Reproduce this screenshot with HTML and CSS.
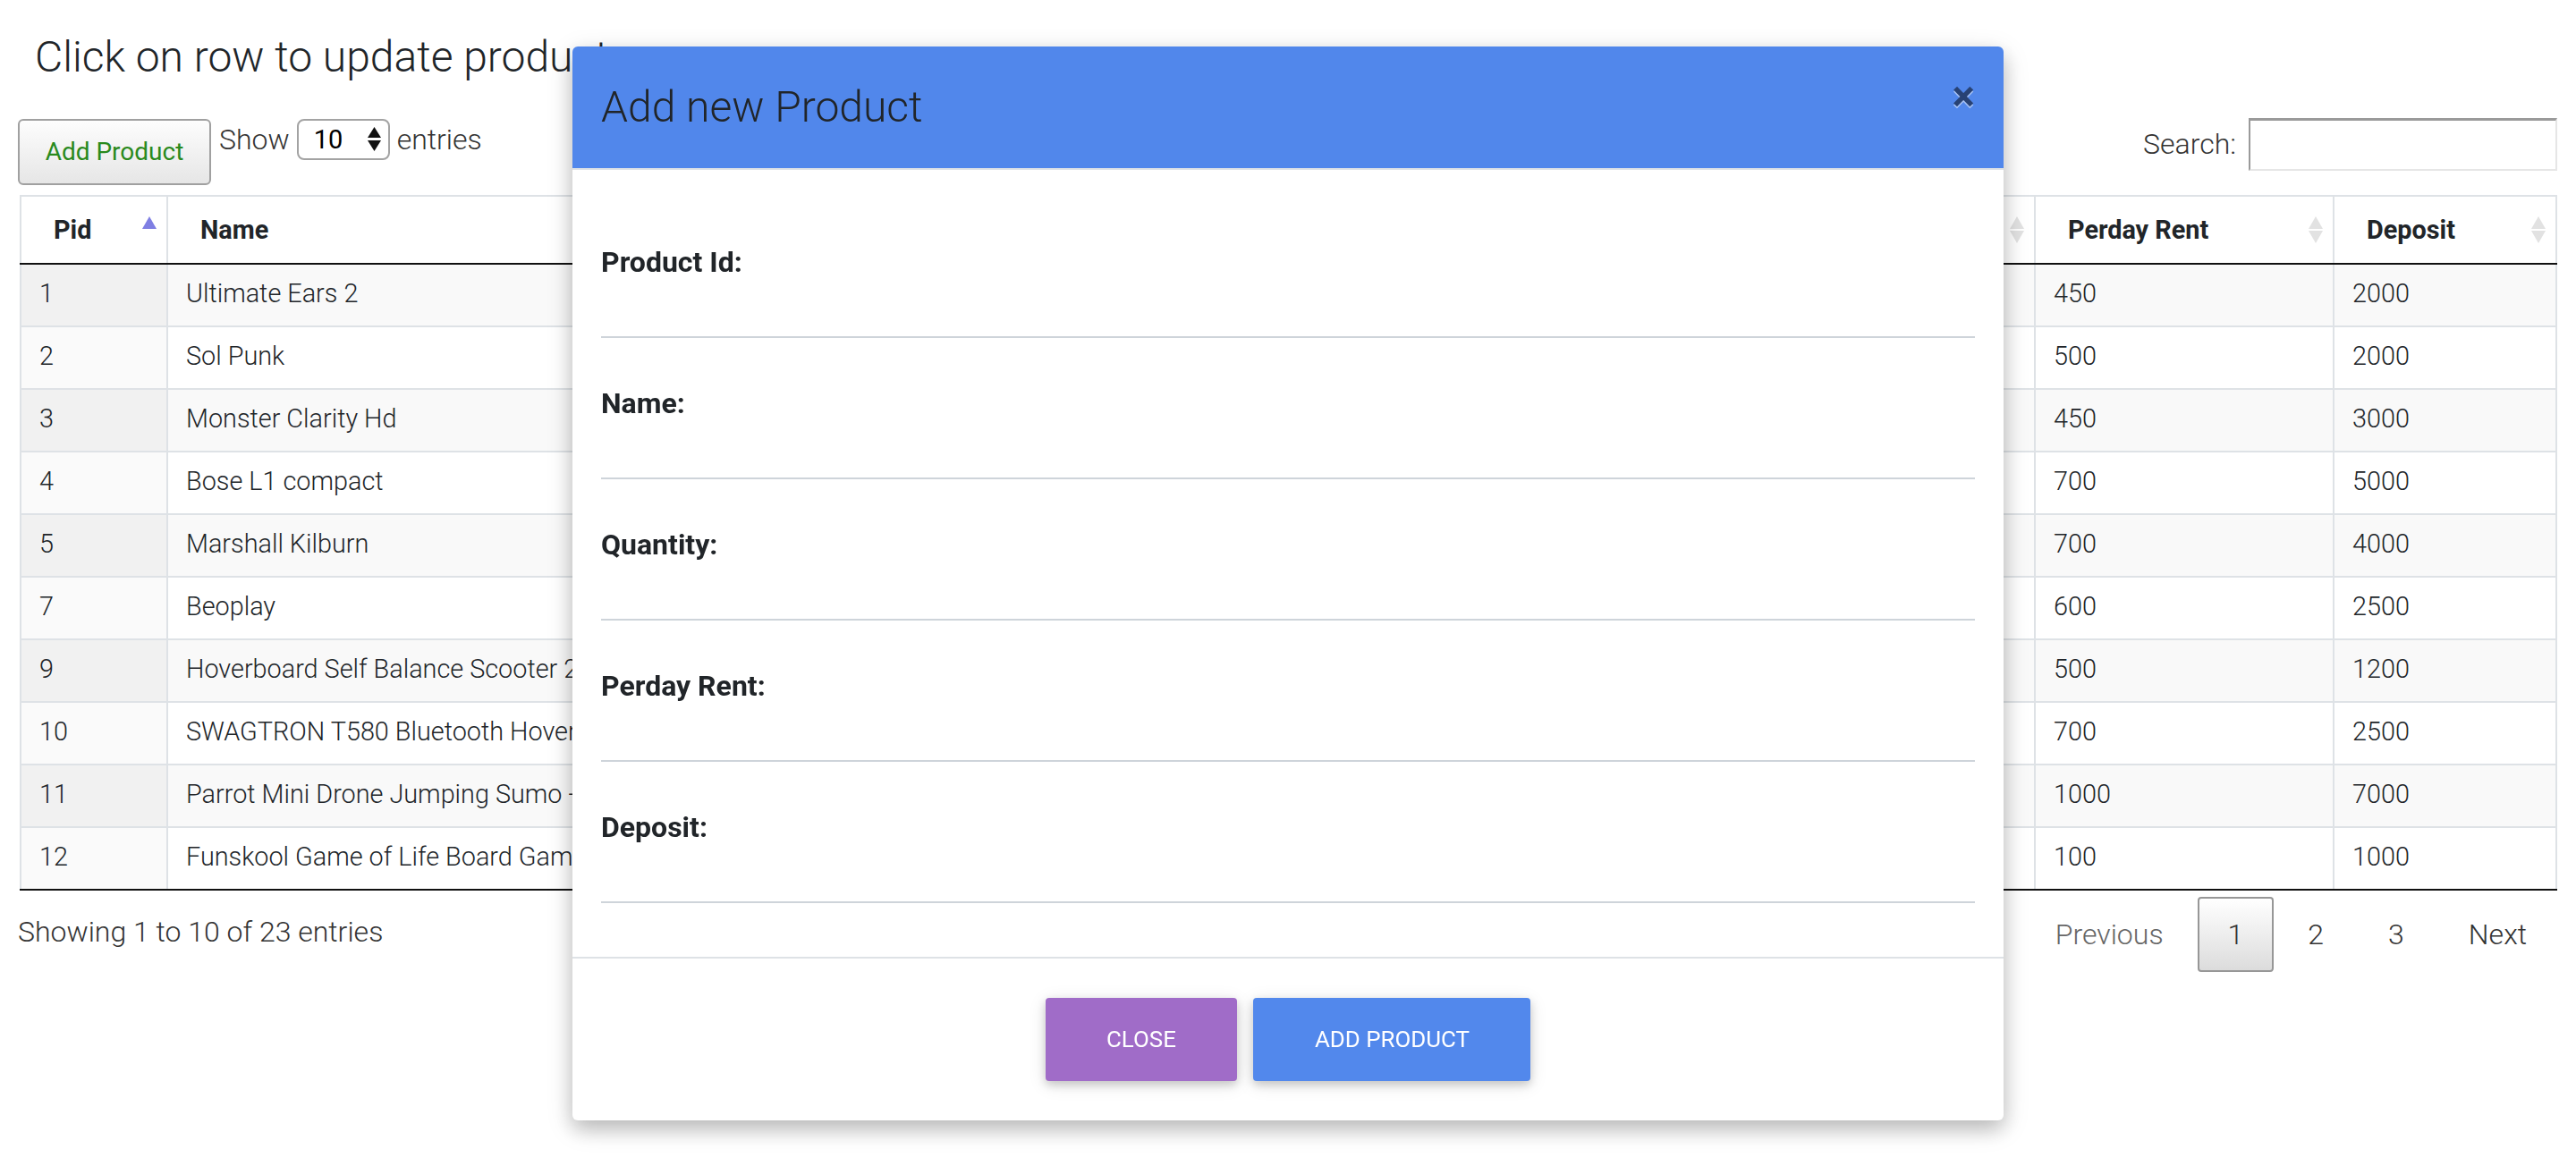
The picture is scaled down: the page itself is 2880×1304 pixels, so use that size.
FILE: index.html
```html
<!DOCTYPE html>
<html lang="en">
<head>
  <meta charset="UTF-8" />
  <meta name="viewport" content="width=device-width, initial-scale=1.0"/>
  <title>Products - Admin</title>
  <link rel="stylesheet" href="styles.css">
</head>
<body>
  <div class="page">
    <h4 class="page-title">Click on row to update product</h4>

    <div class="controls">
      <div class="controls-left">
        <button class="btn-add">Add Product</button>
        <label class="length">
          Show
          <span class="select-box">
            <select>
              <option>10</option>
              <option>25</option>
              <option>50</option>
              <option>100</option>
            </select>
            <svg class="select-arrows" width="15" height="27" viewBox="0 0 15 27">
              <polygon points="7.5,0 15,12 0,12" fill="#111"/>
              <polygon points="0,15 15,15 7.5,27" fill="#111"/>
            </svg>
          </span>
          entries
        </label>
      </div>
      <label class="search">Search: <input type="search"></label>
    </div>

    <table class="products">
      <colgroup>
        <col style="width:164px">
        <col style="width:1600px">
        <col style="width:488px">
        <col style="width:334px">
        <col style="width:249px">
      </colgroup>
      <thead>
        <tr>
          <th><div class="th-inner">Pid
            <svg class="sort" width="16" height="30" viewBox="0 0 16 30"><polygon points="8,0 16,14 0,14" fill="#7f7fe3"/></svg></div></th>
          <th><div class="th-inner">Name
            <svg class="sort" width="16" height="30" viewBox="0 0 16 30"><polygon points="8,0 16,14 0,14" fill="#e2e2e2"/><polygon points="0,16 16,16 8,30" fill="#e2e2e2"/></svg></div></th>
          <th><div class="th-inner">Quantity
            <svg class="sort" width="16" height="30" viewBox="0 0 16 30"><polygon points="8,0 16,14 0,14" fill="#e2e2e2"/><polygon points="0,16 16,16 8,30" fill="#e2e2e2"/></svg></div></th>
          <th><div class="th-inner">Perday Rent
            <svg class="sort" width="16" height="30" viewBox="0 0 16 30"><polygon points="8,0 16,14 0,14" fill="#e2e2e2"/><polygon points="0,16 16,16 8,30" fill="#e2e2e2"/></svg></div></th>
          <th><div class="th-inner">Deposit
            <svg class="sort" width="16" height="30" viewBox="0 0 16 30"><polygon points="8,0 16,14 0,14" fill="#e2e2e2"/><polygon points="0,16 16,16 8,30" fill="#e2e2e2"/></svg></div></th>
        </tr>
      </thead>
      <tbody>
        <tr><td>1</td><td>Ultimate Ears 2</td><td>5</td><td>450</td><td>2000</td></tr>
        <tr><td>2</td><td>Sol Punk</td><td>4</td><td>500</td><td>2000</td></tr>
        <tr><td>3</td><td>Monster Clarity Hd</td><td>3</td><td>450</td><td>3000</td></tr>
        <tr><td>4</td><td>Bose L1 compact</td><td>2</td><td>700</td><td>5000</td></tr>
        <tr><td>5</td><td>Marshall Kilburn</td><td>6</td><td>700</td><td>4000</td></tr>
        <tr><td>7</td><td>Beoplay</td><td>3</td><td>600</td><td>2500</td></tr>
        <tr><td>9</td><td>Hoverboard Self Balance Scooter 2 Wheel</td><td>4</td><td>500</td><td>1200</td></tr>
        <tr><td>10</td><td>SWAGTRON T580 Bluetooth Hoverboard</td><td>2</td><td>700</td><td>2500</td></tr>
        <tr><td>11</td><td>Parrot Mini Drone Jumping Sumo - Black</td><td>5</td><td>1000</td><td>7000</td></tr>
        <tr><td>12</td><td>Funskool Game of Life Board Game</td><td>8</td><td>100</td><td>1000</td></tr>
      </tbody>
    </table>

    <div class="table-footer">
      <div class="info">Showing 1 to 10 of 23 entries</div>
      <div class="paging">
        <a class="page-btn disabled">Previous</a>
        <a class="page-btn current">1</a>
        <a class="page-btn">2</a>
        <a class="page-btn">3</a>
        <a class="page-btn">Next</a>
      </div>
    </div>
  </div>

  <div class="modal">
    <div class="modal-content">
      <div class="modal-header">
        <h4 class="modal-title">Add new Product</h4>
        <button class="close">&times;</button>
      </div>

      <div class="modal-body">
        <div class="field">
          <label for="pid">Product Id:</label>
          <input type="text" id="pid">
        </div>
        <div class="field">
          <label for="pname">Name:</label>
          <input type="text" id="pname">
        </div>
        <div class="field">
          <label for="qty">Quantity:</label>
          <input type="text" id="qty">
        </div>
        <div class="field">
          <label for="rent">Perday Rent:</label>
          <input type="text" id="rent">
        </div>
        <div class="field">
          <label for="deposit">Deposit:</label>
          <input type="text" id="deposit">
        </div>
      </div>

      <div class="modal-footer">
        <button class="btn btn-secondary">Close</button>
        <button class="btn btn-primary">Add Product</button>
      </div>
    </div>
  </div>
</body>
</html>
```

FILE: styles.css
```css
* {
  box-sizing: border-box;
}

body {
  margin: 0;
  background: #fff;
  color: #212529;
  font-family: Roboto, "Liberation Sans", sans-serif;
  font-weight: 300;
  font-size: 32px;
}

.page {
  padding: 0 21px 0 20px;
}

.page-title {
  margin: 35px 0 0 19px;
  font-size: 48px;
  line-height: 57.6px;
  font-weight: 300;
}

/* top controls */
.controls {
  margin-top: 39px;
  display: flex;
  justify-content: space-between;
  align-items: flex-start;
}

.controls-left {
  display: flex;
  align-items: flex-start;
}

.btn-add {
  margin-top: 1px;
  width: 216px;
  height: 74px;
  padding: 0;
  border: 2px solid #a0a0a0;
  border-radius: 6px;
  background: linear-gradient(#fdfdfd, #e6e6e6);
  color: #2a8a1d;
  font-family: Roboto, "Liberation Sans", sans-serif;
  font-size: 28px;
  font-weight: 400;
}

.length {
  margin: 1px 0 0 9px;
  height: 46px;
  display: flex;
  align-items: center;
  gap: 8px;
  color: #333;
}

.select-box {
  width: 104px;
  height: 46px;
  display: inline-flex;
  align-items: center;
  justify-content: space-between;
  padding: 0 8px 0 17px;
  border: 2px solid #a3a3a3;
  border-radius: 8px;
  background: #fff;
}

.select-box select {
  appearance: none;
  -webkit-appearance: none;
  border: none;
  background: transparent;
  padding: 0;
  width: 40px;
  font-family: Roboto, "Liberation Sans", sans-serif;
  font-size: 29px;
  font-weight: 400;
  color: #000;
}

.search {
  display: flex;
  align-items: center;
  gap: 14px;
  color: #333;
}

.search input {
  width: 345px;
  height: 59px;
  border-style: solid;
  border-width: 3px 2px 2px 2px;
  border-color: #9a9a9a #e6e6e6 #e6e6e6 #9a9a9a;
  font-size: 28px;
  outline: none;
}

/* table */
.products {
  margin: 11px 0 0 2px;
  width: 2835px;
  table-layout: fixed;
  border-collapse: collapse;
  font-size: 28.8px;
}

.products th,
.products td {
  border-right: 2px solid #dee2e6;
  border-bottom: 2px solid #dee2e6;
  text-align: left;
  white-space: nowrap;
  overflow: hidden;
}

.products th:first-child,
.products td:first-child {
  border-left: 2px solid #dee2e6;
}

.products th {
  border-top: 2px solid #dee2e6;
  border-bottom: 2px solid #111;
  padding: 15px 11px 15px 36px;
  line-height: 44px;
  font-weight: 700;
}

.th-inner {
  display: flex;
  justify-content: space-between;
  align-items: center;
}

.products td {
  padding: 10px 20px 14px;
  line-height: 44px;
  font-weight: 300;
}

.products tbody tr:nth-child(odd) {
  background: #f9f9f9;
}

.products tbody tr:nth-child(odd) td:first-child {
  background: #f1f1f1;
}

.products tbody tr:nth-child(even) td:first-child {
  background: #fafafa;
}

.products tbody tr:last-child td {
  border-bottom: 2px solid #111;
}

/* info + paging */
.table-footer {
  display: flex;
  justify-content: space-between;
  align-items: flex-start;
}

.info {
  padding-top: 22px;
  line-height: 48px;
  color: #333;
}

.paging {
  padding-top: 7px;
  display: flex;
}

.page-btn {
  margin-left: 4px;
  padding: 16px 32px;
  line-height: 48px;
  border: 2px solid transparent;
  border-radius: 4px;
  color: #333;
}

.page-btn.disabled {
  color: #666;
}

.page-btn.current {
  border-color: #979797;
  background: linear-gradient(#fff, #dcdcdc);
}

/* modal */
.modal {
  position: fixed;
  top: 0;
  left: 0;
  right: 0;
  bottom: 0;
  display: flex;
  justify-content: center;
  align-items: flex-start;
  padding-top: 52px;
}

.modal-content {
  width: 1600px;
  background: #fff;
  border-radius: 6px;
  overflow: hidden;
  box-shadow: 0 10px 22px 0 rgba(0, 0, 0, 0.18), 0 8px 30px 0 rgba(0, 0, 0, 0.15);
}

.modal-header {
  display: flex;
  align-items: flex-start;
  padding: 32px;
  background: #5187eb;
  border-bottom: 2px solid #dee2e6;
}

.modal-title {
  margin: 0;
  font-size: 48px;
  line-height: 72px;
  font-weight: 300;
  color: #212529;
}

.close {
  margin: -32px -32px -32px auto;
  padding: 32px;
  border: none;
  background: transparent;
  font-family: Roboto, "Liberation Sans", sans-serif;
  font-size: 48px;
  font-weight: 700;
  line-height: 1;
  color: #000;
  text-shadow: 0 2px 0 #fff;
  opacity: 0.5;
}

.modal-body {
  padding: 30px 32px 60px;
}

.field {
  margin-top: 51px;
}

.field label {
  display: block;
  line-height: 44px;
  font-size: 32px;
  font-weight: 700;
  color: #212529;
}

.field input {
  display: block;
  width: 100%;
  height: 63px;
  border: none;
  border-bottom: 2px solid #ced4da;
  outline: none;
  font-size: 28px;
}

.modal-footer {
  display: flex;
  justify-content: center;
  gap: 18px;
  padding: 44px 32px;
  border-top: 2px solid #dee2e6;
}

.btn {
  padding: 26.9px 68.5px;
  border: none;
  border-radius: 4px;
  font-family: Roboto, "Liberation Sans", sans-serif;
  font-size: 25.9px;
  font-weight: 400;
  line-height: 1.5;
  text-transform: uppercase;
  color: #fff;
  box-shadow: 0 4px 10px 0 rgba(0, 0, 0, 0.16), 0 4px 20px 0 rgba(0, 0, 0, 0.12);
}

.btn-secondary {
  background: #a06cc8;
}

.btn-primary {
  background: #5288ec;
}
```
